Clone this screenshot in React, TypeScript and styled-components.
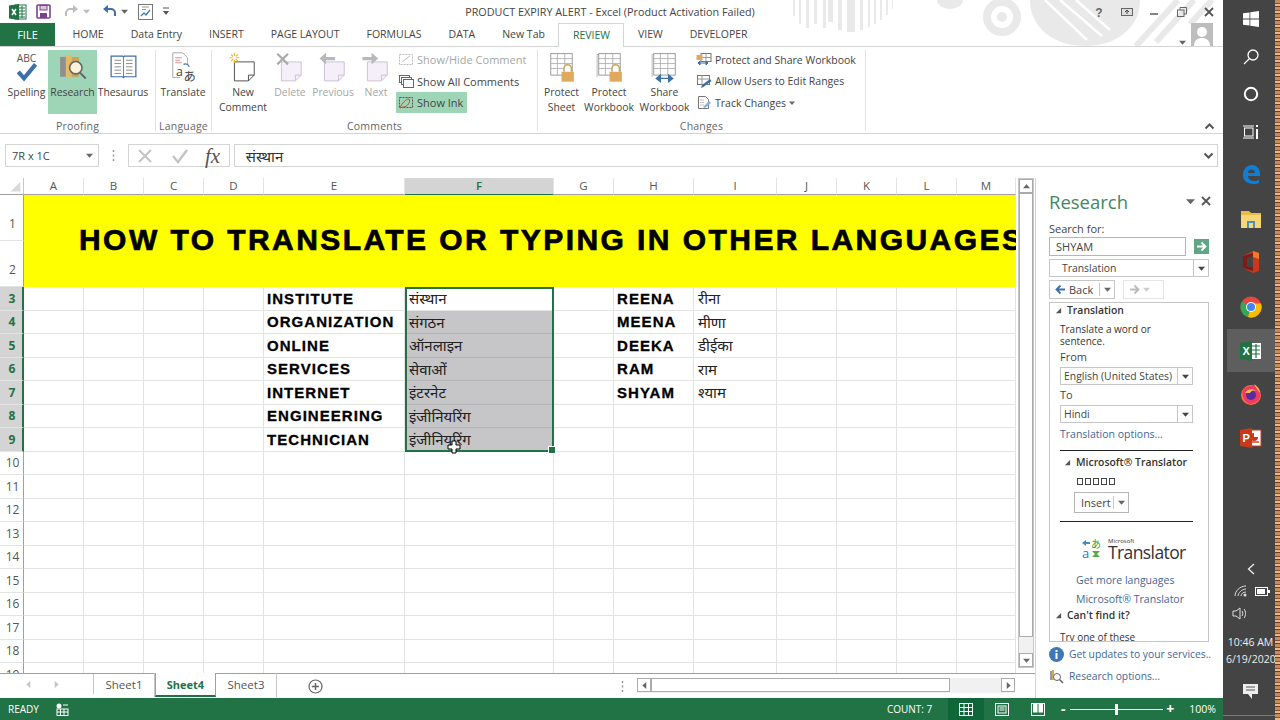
import React from 'react';
import styled, { createGlobalStyle } from 'styled-components';

const GlobalStyle = createGlobalStyle`
  html, body {
    margin: 0;
    padding: 0;
    width: 1280px;
    height: 720px;
    overflow: hidden;
    background: #fff;
    font-family: "Open Sans", "Noto Sans", "Noto Sans Devanagari", sans-serif;
    color: #444;
  }
  * { box-sizing: border-box; }
`;

const GREEN = '#217346';
const HILITE = '#9fd5b7';
const LINK = '#3f6797';

const Screen = styled.div`
  width: 1280px;
  height: 720px;
  display: flex;
  overflow: hidden;
`;

const ExcelWindow = styled.div`
  width: 1223px;
  height: 720px;
  display: flex;
  flex-direction: column;
  flex: none;
`;

/* ---------- header ---------- */

const Header = styled.header`
  position: relative;
  height: 47px;
  flex: none;
  border-bottom: 1px solid #d4d4d4;
`;

const TitleArt = styled.svg`
  position: absolute;
  left: 790px;
  top: 0;
  width: 433px;
  height: 46px;
`;

const TitleBar = styled.div`
  position: relative;
  height: 23px;
  display: flex;
  align-items: center;
  padding-left: 9px;
`;

const QuickAccess = styled.div`
  display: flex;
  align-items: center;
  gap: 9px;
  width: 180px;
  flex: none;
`;

const QatPair = styled.div<{ $left: number }>`
  display: flex;
  align-items: center;
  gap: 4px;
  margin-left: ${(p) => p.$left}px;
`;

const TitleText = styled.div`
  width: 842px;
  flex: none;
  text-align: center;
  font-size: 10.8px;
  color: #444;
  white-space: nowrap;
`;

const WindowControls = styled.div`
  display: flex;
  align-items: center;
  gap: 15.5px;
  margin-left: 62px;
`;

const TabRow = styled.div`
  position: relative;
  height: 23px;
  display: flex;
  align-items: flex-end;
`;

const FileTab = styled.div`
  width: 55px;
  height: 23px;
  margin-right: 4px;
  background: ${GREEN};
  color: #fff;
  font-size: 11px;
  line-height: 23px;
  text-align: center;
`;

const Tab = styled.div<{ $active?: boolean }>`
  height: ${(p) => (p.$active ? '24px' : '23px')};
  margin-bottom: ${(p) => (p.$active ? '-1px' : '0')};
  padding: 0 13.5px;
  font-size: 10.5px;
  line-height: 23px;
  white-space: nowrap;
  color: ${(p) => (p.$active ? GREEN : '#444')};
  background: ${(p) => (p.$active ? '#fff' : 'transparent')};
  border: ${(p) => (p.$active ? '1px solid #d4d4d4' : '0')};
  border-bottom: 0;
`;

const Account = styled.div`
  position: absolute;
  right: 10px;
  top: 0;
  display: flex;
  align-items: flex-end;
  gap: 5px;
  height: 23px;
`;

const Ribbon = styled.div`
  position: relative;
  height: 87px;
  flex: none;
  display: flex;
  padding-top: 3px;
  border-bottom: 1px solid #d4d4d4;
`;

const RibbonGroup = styled.div<{ $width: number }>`
  width: ${(p) => p.$width}px;
  flex: none;
  display: flex;
  flex-direction: column;
  border-right: 1px solid #e3e3e3;
  margin-bottom: 2px;
`;

const GroupBody = styled.div<{ $pad?: number }>`
  flex: 1;
  display: flex;
  padding-left: ${(p) => p.$pad ?? 0}px;
`;

const GroupLabel = styled.div`
  height: 14px;
  font-size: 10.5px;
  line-height: 18px;
  letter-spacing: 0.2px;
  text-align: center;
  color: #666;
`;

const BigButton = styled.div<{ $width: number; $on?: boolean; $off?: boolean }>`
  width: ${(p) => p.$width}px;
  height: 64px;
  flex: none;
  display: flex;
  flex-direction: column;
  align-items: center;
  padding-top: 2px;
  font-size: 10.4px;
  line-height: 15px;
  text-align: center;
  white-space: nowrap;
  background: ${(p) => (p.$on ? HILITE : 'transparent')};
  color: ${(p) => (p.$off ? '#a6a6a6' : '#444')};
  & > svg {
    width: 31px;
    height: 33px;
    flex: none;
  }
`;

const SmallStack = styled.div<{ $width: number; $size: number }>`
  width: ${(p) => p.$width}px;
  flex: none;
  display: flex;
  flex-direction: column;
  gap: 0.5px;
  margin-top: -1px;
  font-size: ${(p) => p.$size}px;
`;

const SmallButton = styled.div<{ $on?: boolean; $off?: boolean }>`
  height: 21px;
  display: flex;
  align-items: center;
  align-self: flex-start;
  gap: 3px;
  padding: 0 4px 0 2px;
  white-space: nowrap;
  background: ${(p) => (p.$on ? HILITE : 'transparent')};
  color: ${(p) => (p.$off ? '#a6a6a6' : '#444')};
`;

const Collapse = styled.svg`
  position: absolute;
  right: 8px;
  bottom: 3px;
`;

/* ---------- formula bar ---------- */

const FormulaBar = styled.div`
  height: 44px;
  flex: none;
  display: flex;
  align-items: flex-start;
  padding: 10px 5px 0 5px;
`;

const NameBox = styled.div`
  width: 94px;
  height: 23px;
  border: 1px solid #d4d4d4;
  display: flex;
  align-items: center;
  justify-content: space-between;
  padding: 0 5px 0 6px;
  font-size: 11px;
`;

const Dots = styled.div`
  width: 29px;
  height: 23px;
  display: flex;
  align-items: center;
  justify-content: center;
`;

const FuncBox = styled.div`
  width: 102px;
  height: 23px;
  border: 1px solid #d4d4d4;
  display: flex;
  align-items: center;
  gap: 19px;
  padding-left: 8px;
  color: #555;
`;

const FxLabel = styled.span`
  font-family: "Liberation Serif", serif;
  font-style: italic;
  font-size: 21px;
  line-height: 20px;
  margin-left: -2px;
`;

const FormulaInput = styled.div`
  width: 985px;
  height: 23px;
  margin-left: 4px;
  border: 1px solid #d4d4d4;
  display: flex;
  align-items: center;
  justify-content: space-between;
  padding: 0 3px 0 11px;
  font-size: 15px;
  color: #333;
`;

/* ---------- workspace ---------- */

const Workspace = styled.div`
  flex: 1;
  min-height: 0;
  display: flex;
`;

const SheetArea = styled.div`
  width: 1036px;
  flex: none;
  display: flex;
  flex-direction: column;
  border-right: 1px solid #d4d4d4;
`;

const SheetTop = styled.div`
  height: 495px;
  flex: none;
  display: flex;
  overflow: hidden;
`;

const GridClip = styled.div`
  position: relative;
  width: 1016px;
  height: 495px;
  flex: none;
  overflow: hidden;
`;

const SheetGrid = styled.div`
  display: grid;
  grid-template-columns: 24px 60px 60px 60px 60px 141px 149px 60px 80px 83px 60px 60px 60px 59px;
  grid-template-rows: 17px 46px 46px repeat(17, 23.5px);
`;

const Corner = styled.div`
  border-right: 1px solid #c6c6c6;
  border-bottom: 1px solid #9f9f9f;
  display: flex;
  align-items: flex-end;
  justify-content: flex-end;
  padding: 0 1px 1px 0;
`;

const ColHead = styled.div<{ $on?: boolean }>`
  font-size: 11.5px;
  line-height: 16px;
  text-align: center;
  color: ${(p) => (p.$on ? GREEN : '#555')};
  font-weight: ${(p) => (p.$on ? 600 : 400)};
  background: ${(p) => (p.$on ? '#d4d4d4' : '#fff')};
  border-right: 1px solid #e3e3e3;
  border-bottom: 1px solid ${(p) => (p.$on ? GREEN : '#9f9f9f')};
`;

const RowHead = styled.div<{ $on?: boolean; $tall?: boolean }>`
  font-size: 12px;
  display: flex;
  align-items: center;
  justify-content: center;
  padding-left: 2px;
  padding-top: ${(p) => (p.$tall ? '12px' : '0')};
  color: ${(p) => (p.$on ? GREEN : '#555')};
  font-weight: ${(p) => (p.$on ? 700 : 400)};
  background: ${(p) => (p.$on ? '#d4d4d4' : '#fff')};
  border-right: ${(p) => (p.$on ? `2px solid ${GREEN}` : '1px solid #9f9f9f')};
  border-bottom: 1px solid #e3e3e3;
`;

const Banner = styled.div`
  grid-column: 2 / -1;
  grid-row: 2 / 4;
  background: #ffff00;
  display: flex;
  align-items: center;
  padding: 0 0 2px 55px;
  overflow: hidden;
  font-family: "Liberation Sans", Arial, sans-serif;
  font-weight: 700;
  font-size: 30px;
  letter-spacing: 2.44px;
  color: #000;
  white-space: nowrap;
  -webkit-text-stroke: 0.7px #000;
`;

const Cell = styled.div<{ $selected?: boolean }>`
  display: flex;
  align-items: center;
  padding-left: 3px;
  overflow: visible;
  white-space: nowrap;
  background: ${(p) => (p.$selected ? '#c6c5c8' : '#fff')};
  border-right: 1px solid ${(p) => (p.$selected ? '#c6c5c8' : '#e3e3e3')};
  border-bottom: 1px solid ${(p) => (p.$selected ? '#b3b2b5' : '#e3e3e3')};
`;

const LabelText = styled.span`
  font-family: "Liberation Sans", Arial, sans-serif;
  font-weight: 700;
  font-size: 15px;
  letter-spacing: 1.05px;
  color: #000;
  -webkit-text-stroke: 0.3px #000;
`;

const HindiText = styled.span`
  font-size: 15px;
  margin-left: 1px;
  color: #222;
`;

const SelectionBox = styled.div`
  position: absolute;
  left: 405px;
  top: 109px;
  width: 149px;
  height: 165px;
  border: 2px solid ${GREEN};
  pointer-events: none;
  &::after {
    content: '';
    position: absolute;
    right: -4px;
    bottom: -4px;
    width: 6px;
    height: 6px;
    background: ${GREEN};
    border: 1px solid #fff;
  }
`;

const CellCursor = styled.svg`
  position: absolute;
  left: 447px;
  top: 262px;
`;

const VScroll = styled.div`
  width: 16px;
  height: 490px;
  margin-left: 2px;
  flex: none;
  display: flex;
  flex-direction: column;
  border: 1px solid #c6c6c6;
  background: #f1f1f1;
`;

const ScrollArrow = styled.div`
  height: 14px;
  width: 14px;
  flex: none;
  background: #fff;
  border: 1px solid #ababab;
  display: flex;
  align-items: center;
  justify-content: center;
`;

const VThumb = styled.div`
  height: 444px;
  flex: none;
  background: #fff;
  border: 1px solid #ababab;
`;

const SheetBar = styled.div`
  height: 25px;
  flex: none;
  display: flex;
  align-items: stretch;
  border-top: 1px solid #9f9f9f;
`;

const TabNav = styled.div`
  width: 94px;
  display: flex;
  align-items: center;
  padding-left: 25px;
  gap: 21px;
  flex: none;
  border-right: 1px solid #c6c6c6;
  margin-bottom: 4px;
`;

const SheetTab = styled.div<{ $active?: boolean }>`
  width: 61px;
  height: 24px;
  flex: none;
  margin-top: -1px;
  padding-top: 2px;
  text-align: center;
  font-size: ${(p) => (p.$active ? '11px' : '11.5px')};
  line-height: 20px;
  font-weight: ${(p) => (p.$active ? 700 : 400)};
  color: ${(p) => (p.$active ? GREEN : '#555')};
  background: ${(p) => (p.$active ? '#fff' : 'transparent')};
  border-left: ${(p) => (p.$active ? '1px solid #9f9f9f' : '0')};
  border-right: 1px solid ${(p) => (p.$active ? '#9f9f9f' : '#c6c6c6')};
  border-bottom: ${(p) => (p.$active ? `2px solid ${GREEN}` : '0')};
  white-space: nowrap;
`;

const AddSheet = styled.div`
  margin-left: 31px;
  display: flex;
  align-items: center;
  width: 313px;
  flex: none;
`;

const SplitDots = styled.div`
  width: 16px;
  display: flex;
  align-items: center;
  flex: none;
`;

const HScroll = styled.div`
  width: 378px;
  height: 15px;
  margin-top: 4px;
  flex: none;
  display: flex;
  background: #f1f1f1;
`;

const HThumb = styled.div`
  width: 299px;
  height: 14px;
  flex: none;
  background: #fff;
  border: 1px solid #ababab;
`;

const ScrollGap = styled.div`
  flex: 1;
`;

/* ---------- research pane ---------- */

const ResearchPane = styled.aside`
  width: 187px;
  flex: none;
  position: relative;
  padding: 0 14px 0 13px;
  display: flex;
  flex-direction: column;
`;

const PaneHead = styled.div`
  height: 30px;
  margin-top: 8px;
  display: flex;
  align-items: center;
  justify-content: space-between;
`;

const PaneTitle = styled.div`
  font-size: 18.5px;
  font-weight: 400;
  color: ${GREEN};
  opacity: 0.85;
`;

const PaneActions = styled.div`
  display: flex;
  align-items: center;
  gap: 5px;
  margin-right: -3px;
`;

const SearchLabel = styled.div`
  font-size: 11px;
  line-height: 13px;
  margin-top: 6px;
  height: 15px;
`;

const SearchRow = styled.div`
  height: 19px;
  display: flex;
  justify-content: space-between;
`;

const TextField = styled.div`
  width: 137px;
  height: 19px;
  border: 1px solid #b5b5b5;
  font-size: 11px;
  line-height: 17px;
  padding-left: 6px;
`;

const GoButton = styled.div`
  width: 15px;
  height: 15px;
  margin-top: 2px;
  background: #5fa586;
  display: flex;
  align-items: center;
  justify-content: center;
`;

const Select = styled.div<{ $width?: number }>`
  width: ${(p) => (p.$width ? `${p.$width}px` : '100%')};
  height: 18px;
  flex: none;
  border: 1px solid #c6c6c6;
  display: flex;
  align-items: center;
  justify-content: space-between;
  font-size: 10.4px;
  padding-left: 3px;
  white-space: nowrap;
`;

const SelectArrow = styled.div`
  width: 15px;
  height: 100%;
  border-left: 1px solid #c6c6c6;
  display: flex;
  align-items: center;
  justify-content: center;
  flex: none;
`;

const SourceSelect = styled(Select)`
  margin-top: 3px;
  padding-left: 12px;
`;

const NavRow = styled.div`
  height: 19px;
  margin-top: 3px;
  display: flex;
  gap: 8px;
`;

const NavButton = styled.div<{ $width: number; $off?: boolean }>`
  width: ${(p) => p.$width}px;
  height: 19px;
  border: 1px solid ${(p) => (p.$off ? '#e5e5e5' : '#c6c6c6')};
  display: flex;
  align-items: center;
  font-size: 11px;
  padding-left: 5px;
  gap: 3px;
`;

const NavDrop = styled.div`
  margin-left: auto;
  width: 15px;
  height: 13px;
  border-left: 1px solid #c6c6c6;
  display: flex;
  align-items: center;
  justify-content: center;
`;

const ResultsPanel = styled.div`
  height: 340px;
  margin-top: 3px;
  flex: none;
  border: 1px solid #c6c6c6;
  overflow: hidden;
  padding: 0 0 0 3px;
  font-size: 11px;
`;

const SectionHead = styled.div<{ $indent?: number; $top?: number }>`
  display: flex;
  align-items: center;
  gap: 5px;
  height: 14px;
  margin-top: ${(p) => p.$top ?? 0}px;
  padding-left: ${(p) => p.$indent ?? 2}px;
  font-size: 10.4px;
  font-weight: 600;
  color: #333;
  white-space: nowrap;
`;

const PanelBody = styled.div`
  padding-left: 7px;
  width: 155px;
`;

const PanelText = styled.div<{ $top: number }>`
  font-size: 10px;
  line-height: 12px;
  color: #333;
  margin-top: ${(p) => p.$top}px;
`;

const PanelLabel = styled.div`
  font-size: 11px;
  line-height: 14px;
  margin: 3px 0 3px;
`;

const PanelLink = styled.div<{ $indent?: number; $top: number }>`
  font-size: 10.5px;
  line-height: 14px;
  color: ${LINK};
  margin-top: ${(p) => p.$top}px;
  padding-left: ${(p) => p.$indent ?? 0}px;
  white-space: nowrap;
`;

const Rule = styled.div<{ $top: number }>`
  width: 133px;
  height: 1px;
  background: #222;
  margin-top: ${(p) => p.$top}px;
`;

const Tofu = styled.div`
  display: flex;
  gap: 2px;
  margin: 9px 0 0 17px;
`;

const TofuBox = styled.span`
  width: 6px;
  height: 7px;
  border: 1px solid #444;
`;

const InsertButton = styled.div`
  width: 55px;
  height: 21px;
  margin: 7px 0 0 14px;
  border: 1px solid #b5b5b5;
  display: flex;
  align-items: center;
  padding-left: 6px;
  font-size: 11px;
`;

const TranslatorLogo = styled.div`
  display: flex;
  align-items: center;
  gap: 6px;
  height: 22px;
  margin: 16px 0 13px 22px;
`;

const LogoWords = styled.div`
  display: flex;
  flex-direction: column;
  font-family: "Open Sans", sans-serif;
  color: #333;
`;

const LogoSmall = styled.span`
  font-size: 6px;
  line-height: 6px;
`;

const LogoBig = styled.span`
  font-size: 17.500px;
  line-height: 16px;
  letter-spacing: -0.6px;
`;

const PaneFooter = styled.div`
  display: flex;
  flex-direction: column;
  gap: 6px;
  margin-top: 4px;
`;

const FooterLink = styled.div`
  display: flex;
  align-items: center;
  gap: 5px;
  height: 16px;
  font-size: 10.3px;
  color: ${LINK};
  white-space: nowrap;
  & > svg {
    flex: none;
  }
`;

/* ---------- status bar ---------- */

const StatusBar = styled.footer`
  height: 22px;
  flex: none;
  background: ${GREEN};
  color: #fff;
  display: flex;
  align-items: center;
  padding-left: 8px;
  font-size: 10px;
`;

const ReadyLabel = styled.span`
  width: 48px;
`;

const StatusRight = styled.div`
  margin-left: auto;
  height: 100%;
  display: flex;
  align-items: center;
`;

const CountLabel = styled.span`
  margin-right: 16px;
`;

const ViewButton = styled.div<{ $on?: boolean }>`
  width: 36px;
  height: 100%;
  display: flex;
  align-items: center;
  justify-content: center;
  background: ${(p) => (p.$on ? '#0f6638' : 'transparent')};
`;

const ZoomSlider = styled.div`
  display: flex;
  align-items: center;
  width: 123px;
  padding-left: 3px;
`;

const ZoomTrack = styled.div`
  position: relative;
  width: 93px;
  height: 1px;
  margin: 0 3px;
  background: #fff;
  &::after {
    content: '';
    position: absolute;
    left: 45px;
    top: -5px;
    width: 3px;
    height: 11px;
    background: #fff;
  }
`;

const ZoomSign = styled.span`
  width: 8px;
  text-align: center;
  font-size: 14px;
  font-weight: 700;
  line-height: 12px;
`;

const ZoomValue = styled.span`
  font-size: 10.5px;
  margin-left: 10px;
  margin-right: 7px;
`;

/* ---------- windows taskbar ---------- */

const Taskbar = styled.nav`
  width: 52px;
  flex: none;
  background: #444444;
  display: flex;
  flex-direction: column;
  justify-content: space-between;
  padding-bottom: 4px;
  color: #fff;
`;

const TaskGroup = styled.div`
  display: flex;
  flex-direction: column;
`;

const TaskSlot = styled.div<{ $h: number; $on?: boolean }>`
  height: ${(p) => p.$h}px;
  margin-left: 4px;
  display: flex;
  align-items: center;
  justify-content: center;
  background: ${(p) => (p.$on ? '#5e5e5e' : 'transparent')};
`;

const NoticeSlot = styled(TaskSlot)`
  margin-left: 0;
  padding-left: 4px;
  border-bottom: 1px solid #7a7a7a;
`;

const TrayRow = styled.div<{ $pad: number }>`
  display: flex;
  align-items: center;
  gap: 8px;
  height: 22px;
  padding-left: ${(p) => p.$pad}px;
`;

const ClockText = styled.div`
  font-size: 10.5px;
  line-height: 17px;
  text-align: center;
  white-space: nowrap;
  margin: 10px 0 0 3px;
  overflow: hidden;
  color: #eee;
`;

const Wallpaper = styled.div`
  width: 5px;
  flex: none;
  background: repeating-linear-gradient(
    180deg,
    #c98a5a 0 3px,
    #8a4f33 3px 4px,
    #e6b98c 4px 6px,
    #6d3a27 6px 7px
  );
`;

/* ---------- icons ---------- */

const Tri = ({ dir = 'down', c = '#666', s = 7 }: { dir?: 'down' | 'up' | 'left' | 'right' | 'corner'; c?: string; s?: number }) => {
  const pts = {
    down: '0,2 8,2 4,6.5',
    up: '0,6 8,6 4,1.5',
    left: '6,0 6,8 1.5,4',
    right: '2,0 2,8 6.5,4',
    corner: '7,1 7,7 1,7',
  }[dir];
  return (
    <svg width={s} height={s} viewBox="0 0 8 8">
      <polygon points={pts} fill={c} />
    </svg>
  );
};

const ExcelLogo = ({ size = 18 }: { size?: number }) => (
  <svg width={size} height={size} viewBox="0 0 18 18">
    <rect x="6" y="2" width="11" height="14" fill="#fff" stroke={GREEN} />
    <path d="M10 5h6M10 8h6M10 11h6M10 14h6M13 3v12" stroke={GREEN} strokeWidth="1" />
    <path d="M0 2.5 10 1v16L0 15.5z" fill={GREEN} />
    <path d="M3 6l4 6M7 6l-4 6" stroke="#fff" strokeWidth="1.5" />
  </svg>
);

const SaveIcon = () => (
  <svg width="15" height="15" viewBox="0 0 15 15">
    <rect x="1" y="1" width="13" height="13" rx="1" fill="#fff" stroke="#7c3f8f" strokeWidth="1.6" />
    <rect x="4" y="1.5" width="7" height="4.5" fill="#d9c7e0" stroke="#7c3f8f" />
    <rect x="4" y="9" width="7" height="5" fill="#7c3f8f" />
  </svg>
);

const CurveArrow = ({ c, flip }: { c: string; flip?: boolean }) => (
  <svg width="15" height="13" viewBox="0 0 15 13" style={flip ? { transform: 'scaleX(-1)' } : undefined}>
    <path d="M2 11V8a4 4 0 0 1 4-4h6" fill="none" stroke={c} strokeWidth="2" />
    <path d="M9 0l5 4-5 4z" fill={c} />
  </svg>
);

const FormIcon = () => (
  <svg width="15" height="16" viewBox="0 0 15 16">
    <rect x="0.5" y="0.5" width="14" height="15" fill="#fff" stroke="#777" />
    <path d="M3 12l3-3 2 2 4-5" fill="none" stroke="#3f7fbf" strokeWidth="1.4" />
    <path d="M4 3h7M4 5.5h4" stroke="#999" />
  </svg>
);

const CustomizeIcon = () => (
  <svg width="8" height="9" viewBox="0 0 8 9">
    <path d="M1 1h6" stroke="#555" />
    <polygon points="1,4 7,4 4,8" fill="#555" />
  </svg>
);

const SpellingIcon = () => (
  <svg viewBox="0 0 36 40">
    <text x="18" y="12" textAnchor="middle" fontSize="12.5" fontFamily="Open Sans, sans-serif" fill="#555">ABC</text>
    <path d="M8 22l7 8L29 13" transform="translate(0 2)" fill="none" stroke="#3d6fa8" strokeWidth="5" />
  </svg>
);

const ResearchIcon = () => (
  <svg viewBox="0 0 36 40">
    <rect x="3" y="6" width="7" height="24" fill="#8f8f8f" />
    <rect x="10" y="4" width="7" height="26" fill="#e4b96a" />
    <rect x="17" y="6" width="9" height="24" fill="#c9a25b" />
    <circle cx="22" cy="19" r="7.500" fill="#fdf3d8" stroke="#666" strokeWidth="2" />
    <path d="M27 25l7 7" stroke="#666" strokeWidth="2.500" />
  </svg>
);

const ThesaurusIcon = () => (
  <svg viewBox="0 0 36 40">
    <path d="M3 5h14l1 1 1-1h14v25H19l-1 1-1-1H3z" fill="#fff" stroke="#3d6fa8" strokeWidth="1.500" />
    <path d="M7 10h8M7 14h8M7 18h8M7 22h8M7 26h8M21 10h8M21 14h8M21 18h8M21 22h8M21 26h8" stroke="#777" />
    <path d="M18 6v25" stroke="#3d6fa8" />
  </svg>
);

const TranslateIcon = () => (
  <svg viewBox="0 0 36 40">
    <path d="M5 1h12l6 6v8M5 1v30h9" fill="#fff" stroke="#999" />
    <path d="M8 7h8M8 10h6M8 13h8" stroke="#c77" />
    <text x="9" y="29" fontSize="15" fontFamily="Open Sans, sans-serif" fill="#444">a</text>
    <text x="18" y="35" fontSize="15" fontFamily="Noto Sans CJK JP, sans-serif" fill="#444">あ</text>
    <path d="M18 15a5 5 0 0 1 7 3" fill="none" stroke="#3d6fa8" strokeWidth="1.400" />
  </svg>
);

const CommentSheet = ({ c = '#444', fill = '#fff' }: { c?: string; fill?: string }) => (
  <path d="M7 12h24v16l-7 7H7z M24 35v-7h7" fill={fill} stroke={c} strokeWidth="1.100" />
);

const NewCommentIcon = () => (
  <svg viewBox="0 0 36 40">
    <CommentSheet />
    <g stroke="#f0b429" strokeWidth="1.400">
      <path d="M7 1v12M1 7h12M3 3l8 8M11 3l-8 8" />
    </g>
    <circle cx="7" cy="7" r="2.500" fill="#fff" />
  </svg>
);

const GhostComment = ({ kind }: { kind: 'x' | 'left' | 'right' }) => (
  <svg viewBox="0 0 36 40">
    <CommentSheet c="#c9bdd0" fill="#f5effa" />
    {kind === 'x' && <path d="M2 2l13 13M15 2L2 15" stroke="#aaa" strokeWidth="2.600" />}
    {kind === 'left' && <path d="M1 8l8-7v5h11v4H9v5z" fill="#b8b8b8" />}
    {kind === 'right' && <path d="M20 8l-8-7v5H1v4h11v5z" fill="#b8b8b8" />}
  </svg>
);

const SheetLock = ({ kind }: { kind: 'sheet' | 'book' | 'share' }) => (
  <svg viewBox="0 0 36 40">
    {kind !== 'sheet' && <path d="M3 30V3h25" fill="none" stroke="#aaa" />}
    <rect x="5" y="2" width="26" height="26" fill="#fff" stroke="#888" />
    <path d="M5 8h26M5 14h26M5 20h26M13 2v26M22 2v26" stroke="#aaa" />
    {kind === 'share' ? (
      <path d="M8 32h20M8 32l5-4v8zM28 32l-5-4v8z" fill="#3d6fa8" stroke="#3d6fa8" strokeWidth="1.600" />
    ) : (
      <g>
        <path d="M21 24v-4a4.500 4.500 0 0 1 9 0v4" fill="#fff" stroke="#c9a25b" strokeWidth="1.800" />
        <rect x="18" y="24" width="15" height="12" fill="#e0aa5c" />
      </g>
    )}
  </svg>
);

const SmallIcon = ({ kind }: { kind: 'hide' | 'all' | 'ink' | 'protect' | 'allow' | 'track' }) => (
  <svg width="16" height="15" viewBox="0 0 16 15">
    {kind === 'hide' && (
      <g fill="none" stroke="#bbb">
        <rect x="1.5" y="2.5" width="13" height="10" strokeDasharray="2 1" />
        <path d="M4 10l8-6" />
      </g>
    )}
    {kind === 'all' && (
      <g fill="#fff" stroke="#666">
        <rect x="1.5" y="1.5" width="10" height="7" />
        <rect x="3.5" y="3.5" width="10" height="7" />
        <rect x="5.5" y="5.5" width="10" height="8" />
      </g>
    )}
    {kind === 'ink' && (
      <g fill="none">
        <rect x="1.5" y="2.5" width="13" height="10" stroke="#555" strokeDasharray="2 1" />
        <path d="M2 13c2-5 6-9 9-9 2 2-1 8-6 8z" stroke="#b5533c" />
      </g>
    )}
    {kind === 'protect' && (
      <g>
        <rect x="5" y="1.5" width="10" height="8" fill="#fff" stroke="#777" />
        <path d="M5 5.500h10M10 1.500v8" stroke="#999" />
        <rect x="0.500" y="3" width="6" height="5" fill="#e0aa5c" />
        <path d="M2 11h10M2 11l2-2v4zM12 11l-2-2v4z" stroke="#3d6fa8" fill="#3d6fa8" />
      </g>
    )}
    {kind === 'allow' && (
      <g>
        <rect x="1.5" y="1.5" width="12" height="9" fill="#fff" stroke="#777" />
        <path d="M1.500 5h12M6 1.500v9" stroke="#999" />
        <path d="M5 14l1-3 8-6 1.500 2-8 6z" fill="#3d6fa8" />
      </g>
    )}
    {kind === 'track' && (
      <g>
        <path d="M2.500 1.500h7l3 3v9h-10z" fill="#fff" stroke="#777" />
        <path d="M4.500 5h4M4.500 7.500h3M4.500 10h3" stroke="#888" strokeDasharray="1 1" />
        <path d="M7 12l6-6 2 2-6 5z" fill="#8bb2d8" />
      </g>
    )}
  </svg>
);

const Chevron = () => (
  <svg width="11" height="7" viewBox="0 0 11 7">
    <path d="M1.500 1.500l4 4 4-4" fill="none" stroke="#555" strokeWidth="2" />
  </svg>
);

const WinControl = ({ kind }: { kind: 'help' | 'ribbon' | 'min' | 'max' | 'close' }) => (
  <svg width="12" height="12" viewBox="0 0 12 12">
    {kind === 'help' && (
      <text x="6" y="11" textAnchor="middle" fontSize="12" fontWeight="700" fontFamily="Liberation Sans, sans-serif" fill="#666">?</text>
    )}
    {kind === 'ribbon' && (
      <g>
        <rect x="0.500" y="2.500" width="11" height="7" fill="#ddd" stroke="#666" />
        <path d="M6 8V4M4 6l2-2 2 2" stroke="#444" fill="none" />
      </g>
    )}
    {kind === 'min' && <path d="M2 8h8" stroke="#666" strokeWidth="1.600" />}
    {kind === 'max' && (
      <g fill="none" stroke="#666">
        <rect x="1.500" y="4" width="6.500" height="6.500" />
        <path d="M4 4V1.500h6.500V8H8" />
      </g>
    )}
    {kind === 'close' && <path d="M2 2l8 8M10 2l-8 8" stroke="#555" strokeWidth="1.800" />}
  </svg>
);

const AccountIcon = () => (
  <svg width="22" height="23" viewBox="0 0 22 23">
    <rect width="22" height="23" fill="#bdbdbd" />
    <circle cx="11" cy="9" r="5" fill="#fff" />
    <path d="M3 23c0-6 4-8 8-8s8 2 8 8z" fill="#fff" />
  </svg>
);

const HeaderArt = () => (
  <TitleArt viewBox="0 0 433 46">
    <g fill="#e9e9e9">
      <path d="M3 0h2v16H3zM9 0h2v24H9zM16 0h3v28H16zM24 0h3v24H24zM33 0h3v28H33zM38 0h5v22H38zM48 0h4v30H48zM57 0h8v32H57zM70 0h3v30H70zM78 0h2v27H78zM84 0h2v24H84zM90 0h2v20H90zM96 0h2v15H96zM102 0h1v9H102z" />
      <ellipse cx="160" cy="0" rx="13" ry="9" />
      <circle cx="212" cy="17" r="15" fill="none" stroke="#e9e9e9" strokeWidth="8" />
      <circle cx="212" cy="17" r="5" />
      <path d="M240 0h110c0 28-24 46-55 46s-55-18-55-46z" />
    </g>
    <path d="M255 0l42 40M270 0l42 36M286 0l34 30" stroke="#fff" strokeWidth="2.500" />
    <g stroke="#e9e9e9" strokeWidth="6">
      <path d="M388 0l-42 46M404 0l-38 42M422 0l-22 24" />
    </g>
  </TitleArt>
);

const CrossCursor = () => (
  <CellCursor width="14" height="14" viewBox="0 0 14 14">
    <path d="M5 1h4v4h4v4H9v4H5V9H1V5h4z" fill="#fff" stroke="#000" />
  </CellCursor>
);

const WinLogo = () => (
  <svg width="16" height="16" viewBox="0 0 16 16">
    <path d="M0 2.300l6.500-.9v6.200H0zM7.300 1.300L16 0v7.600H7.300zM0 8.400h6.500v6.200L0 13.700zM7.300 8.400H16V16l-8.700-1.200z" fill="#fff" />
  </svg>
);

const SearchGlass = () => (
  <svg width="16" height="16" viewBox="0 0 16 16">
    <circle cx="10" cy="6" r="5" fill="none" stroke="#fff" strokeWidth="1.300" />
    <path d="M6.500 9.500L1 15" stroke="#fff" strokeWidth="1.300" />
  </svg>
);

const CortanaRing = () => (
  <svg width="16" height="16" viewBox="0 0 16 16">
    <circle cx="8" cy="8" r="6.200" fill="none" stroke="#fff" strokeWidth="2" />
  </svg>
);

const TaskView = () => (
  <svg width="16" height="16" viewBox="0 0 16 16">
    <path d="M0 2h11M0 14h11" stroke="#fff" />
    <rect x="1.500" y="4" width="8.500" height="8" fill="none" stroke="#fff" />
    <path d="M14 1v2M14 5v10" stroke="#fff" strokeWidth="2" />
  </svg>
);

const EdgeIcon = () => (
  <svg width="20" height="20" viewBox="0 0 20 20">
    <path d="M2 11C2 5 6 1 11 1c5 0 8 4 8 9v2H7c0 3 3 5 6 5 2 0 4-.5 5-1v3c-1.500 .7-3.500 1-5.500 1C6 20 2 16 2 11zm5-2h7c0-2-1.500-3.500-3.500-3.500S7 7 7 9z" fill="#0f7fd6" />
  </svg>
);

const FolderIcon = () => (
  <svg width="20" height="18" viewBox="0 0 20 18">
    <path d="M0 1h8l2 2h10v15H0z" fill="#e9b949" />
    <rect x="0" y="5" width="20" height="13" fill="#f7d774" />
    <rect x="6" y="11" width="8" height="7" fill="#4a90c2" />
    <rect x="8" y="13" width="4" height="5" fill="#f7d774" />
  </svg>
);

const OfficeIcon = () => (
  <svg width="18" height="22" viewBox="0 0 18 22">
    <path d="M1 5L11 0l6 2v18l-6 2L1 17z" fill="#c8391b" />
    <path d="M1 5l10-3v18L1 17z" fill="#7d1a1a" />
    <path d="M5 7l6-2v12l-6-2z" fill="#444" />
    <path d="M11 0l6 2v6l-6-2z" fill="#ef7b2a" />
  </svg>
);

const ChromeIcon = () => (
  <svg width="22" height="22" viewBox="0 0 22 22">
    <circle cx="11" cy="11" r="10.500" fill="#e8453c" />
    <path d="M11 11L1.900 5.700A10.500 10.500 0 0 0 8 21.100z" fill="#34a853" />
    <path d="M11 11l-3 10.100A10.500 10.500 0 0 0 21 7.500H11z" fill="#fbbc05" />
    <circle cx="11" cy="11" r="5" fill="#fff" />
    <circle cx="11" cy="11" r="4" fill="#4285f4" />
  </svg>
);

const FirefoxIcon = () => (
  <svg width="22" height="22" viewBox="0 0 22 22">
    <circle cx="11" cy="12" r="10" fill="#ff7139" />
    <path d="M3 7c3-4 12-6 16-1 3 5 1 14-8 15C5 21 1 13 3 7z" fill="#e31587" opacity="0.6" />
    <circle cx="11" cy="12" r="5" fill="#5b2a9d" />
    <path d="M5 10c2-4 8-5 11-2-3-1-5 0-6 2-2 0-3 0-5 0z" fill="#ffbd4f" />
    <path d="M14 1c3 2 6 5 6 9-2-3-4-5-6-9z" fill="#ffbd4f" />
  </svg>
);

const PowerPointIcon = () => (
  <svg width="22" height="20" viewBox="0 0 22 20">
    <rect x="8" y="2" width="13" height="16" fill="#fff" stroke="#c8391b" />
    <path d="M14 5a4 4 0 1 0 4 4h-4z" fill="#c8391b" />
    <path d="M12 14h7" stroke="#c8391b" strokeWidth="1.400" />
    <path d="M0 2l12-2v20L0 18z" fill="#c8391b" />
    <text x="2.500" y="14" fontSize="11" fontWeight="700" fontFamily="Liberation Sans, sans-serif" fill="#fff">P</text>
  </svg>
);

const TaskExcel = () => (
  <svg width="22" height="20" viewBox="0 0 22 20">
    <rect x="8" y="2" width="13" height="16" fill="#fff" />
    <path d="M12 5h8M12 9h8M12 13h8M16 3v14" stroke={GREEN} strokeWidth="1.200" />
    <path d="M0 2l12-2v20L0 18z" fill={GREEN} />
    <text x="2.500" y="14" fontSize="11" fontWeight="700" fontFamily="Liberation Sans, sans-serif" fill="#fff">X</text>
  </svg>
);

const Wifi = () => (
  <svg width="13" height="12" viewBox="0 0 13 12">
    <path d="M1 11C1 6 6 1 12 1M4 11c0-3 4-7 8-7M7 11c0-2 2-4 5-4" fill="none" stroke="#ddd" />
    <circle cx="11" cy="10" r="1.500" fill="#ddd" />
  </svg>
);

const Battery = () => (
  <svg width="15" height="9" viewBox="0 0 15 9">
    <rect x="0.500" y="0.500" width="12" height="8" fill="none" stroke="#fff" />
    <rect x="2" y="2" width="8" height="5" fill="#fff" />
    <rect x="13" y="3" width="2" height="3" fill="#fff" />
  </svg>
);

const Volume = () => (
  <svg width="16" height="13" viewBox="0 0 16 13">
    <path d="M1 4h3l4-3v11L4 9H1z" fill="none" stroke="#ddd" />
    <path d="M10 4c1 1 1 4 0 5M12 2c2 2 2 7 0 9" fill="none" stroke="#ddd" />
  </svg>
);

const Notice = () => (
  <svg width="16" height="15" viewBox="0 0 16 15">
    <path d="M0 0h15v10H9v5l-4-5H0z" fill="#eee" />
    <path d="M3 3h9M3 6h9" stroke="#555" />
  </svg>
);

const GoArrow = ({ c = '#fff', s = 11 }: { c?: string; s?: number }) => (
  <svg width={s} height={s} viewBox="0 0 11 11">
    <path d="M1 5.500h8M5.500 1.500l4 4-4 4" fill="none" stroke={c} strokeWidth="1.800" />
  </svg>
);

const BackArrow = () => (
  <svg width="11" height="11" viewBox="0 0 11 11">
    <path d="M10 5.500H2M5.500 1.500l-4 4 4 4" fill="none" stroke="#3d6fa8" strokeWidth="1.800" />
  </svg>
);

const InfoDot = () => (
  <svg width="15" height="15" viewBox="0 0 15 15">
    <circle cx="7.500" cy="7.500" r="7.500" fill="#3d78b8" />
    <rect x="6.500" y="6" width="2" height="6" fill="#fff" />
    <rect x="6.500" y="3" width="2" height="2" fill="#fff" />
  </svg>
);

const OptionsGlass = () => (
  <svg width="15" height="15" viewBox="0 0 15 15">
    <rect x="1" y="2" width="2" height="9" fill="#999" />
    <rect x="3" y="1" width="2" height="10" fill="#d3a95e" />
    <circle cx="8" cy="8" r="3.500" fill="#fff" stroke="#666" />
    <path d="M10.500 10.500l3.500 3.500" stroke="#666" strokeWidth="1.500" />
  </svg>
);

const TranslatorMark = () => (
  <svg width="20" height="22" viewBox="0 0 20 22">
    <path d="M0 5l4-3v2h4v2H4v2z" fill="#3d8fc7" />
    <text x="9" y="10" fontSize="10" fontFamily="Noto Sans CJK JP, sans-serif" fill="#2f9e44">あ</text>
    <text x="0" y="20" fontSize="13" fontFamily="Open Sans, sans-serif" fill="#1f78c1">a</text>
    <path d="M10 13h8l-3 3 3 3h-8l3-3z" fill="#58a942" />
  </svg>
);

const MacroIcon = () => (
  <svg width="13" height="13" viewBox="0 0 13 13">
    <circle cx="3" cy="3" r="2.500" fill="#fff" />
    <rect x="1" y="6" width="11" height="6.500" fill="none" stroke="#fff" />
    <path d="M1 9h11M4.500 6v6.500M8 6v6.500M7 2h5" stroke="#fff" />
  </svg>
);

const NormalView = () => (
  <svg width="14" height="13" viewBox="0 0 14 13">
    <rect x="0.500" y="0.500" width="13" height="12" fill="none" stroke="#fff" />
    <path d="M0.500 4.500h13M0.500 8.500h13M5 .5v12M9.500 .5v12" stroke="#fff" />
  </svg>
);

const PageView = () => (
  <svg width="14" height="13" viewBox="0 0 14 13">
    <rect x="0.500" y="0.500" width="13" height="12" fill="none" stroke="#fff" />
    <rect x="3" y="3" width="8" height="7" fill="none" stroke="#fff" />
    <path d="M4.500 5h5M4.500 7h5" stroke="#fff" />
  </svg>
);

const BreakView = () => (
  <svg width="14" height="13" viewBox="0 0 14 13">
    <rect x="0.500" y="0.500" width="13" height="12" fill="none" stroke="#fff" />
    <rect x="2" y="0.500" width="4.500" height="9" fill="#fff" />
    <rect x="7.500" y="0.500" width="4.500" height="9" fill="#fff" />
  </svg>
);

const PlusCircle = () => (
  <svg width="15" height="15" viewBox="0 0 15 15">
    <circle cx="7.500" cy="7.500" r="6.500" fill="none" stroke="#666" strokeWidth="1.200" />
    <path d="M7.500 4v7M4 7.500h7" stroke="#666" strokeWidth="1.500" />
  </svg>
);

const VerticalDots = () => (
  <svg width="3" height="11" viewBox="0 0 3 11">
    <path d="M1.500 0v2M1.500 4.500v2M1.500 9v2" stroke="#999" strokeWidth="1.500" />
  </svg>
);

/* ---------- data ---------- */

const tabs = ['HOME', 'Data Entry', 'INSERT', 'PAGE LAYOUT', 'FORMULAS', 'DATA', 'New Tab', 'REVIEW', 'VIEW', 'DEVELOPER'];
const columns = ['A', 'B', 'C', 'D', 'E', 'F', 'G', 'H', 'I', 'J', 'K', 'L', 'M'];
const leftWords = ['INSTITUTE', 'ORGANIZATION', 'ONLINE', 'SERVICES', 'INTERNET', 'ENGINEERING', 'TECHNICIAN'];
const leftHindi = ['संस्थान', 'संगठन', 'ऑनलाइन', 'सेवाओं', 'इंटरनेट', 'इंजीनियरिंग', 'इंजीनियरिंग'];
const names = ['REENA', 'MEENA', 'DEEKA', 'RAM', 'SHYAM'];
const namesHindi = ['रीना', 'मीणा', 'डीईका', 'राम', 'श्याम'];
const rows = Array.from({ length: 17 }, (_, i) => i + 3);

const renderCell = (row: number, col: string) => {
  const idx = row - 3;
  const inTable = idx < 7;
  const inNames = idx < 5;
  const selected = col === 'F' && idx >= 1 && idx < 7;
  let content: React.ReactNode = null;
  if (col === 'E' && inTable) content = <LabelText>{leftWords[idx]}</LabelText>;
  if (col === 'F' && inTable) content = <HindiText>{leftHindi[idx]}</HindiText>;
  if (col === 'H' && inNames) content = <LabelText>{names[idx]}</LabelText>;
  if (col === 'I' && inNames) content = <HindiText>{namesHindi[idx]}</HindiText>;
  return (
    <Cell key={col} $selected={selected}>
      {content}
    </Cell>
  );
};

const App: React.FC = () => {
  return (
    <Screen>
      <GlobalStyle />
      <ExcelWindow>
        <Header>
          <HeaderArt />
          <TitleBar>
            <QuickAccess>
              <ExcelLogo />
              <SaveIcon />
              <QatPair $left={4}>
                <CurveArrow c="#bdbdbd" />
                <Tri c="#bbb" />
              </QatPair>
              <QatPair $left={3}>
                <CurveArrow c="#3d6fa8" flip />
                <Tri />
              </QatPair>
              <QatPair $left={1}>
                <FormIcon />
              </QatPair>
              <CustomizeIcon />
            </QuickAccess>
            <TitleText>PRODUCT EXPIRY ALERT - Excel (Product Activation Failed)</TitleText>
            <WindowControls>
              <WinControl kind="help" />
              <WinControl kind="ribbon" />
              <WinControl kind="min" />
              <WinControl kind="max" />
              <WinControl kind="close" />
            </WindowControls>
          </TitleBar>
          <TabRow>
            <FileTab>FILE</FileTab>
            {tabs.map((t) => (
              <Tab key={t} $active={t === 'REVIEW'}>
                {t}
              </Tab>
            ))}
            <Account>
              <Tri />
              <AccountIcon />
            </Account>
          </TabRow>
        </Header>

        <Ribbon>
          <RibbonGroup $width={156}>
            <GroupBody $pad={5}>
              <BigButton $width={43}>
                <SpellingIcon />
                Spelling
              </BigButton>
              <BigButton $width={49} $on>
                <ResearchIcon />
                Research
              </BigButton>
              <BigButton $width={52}>
                <ThesaurusIcon />
                Thesaurus
              </BigButton>
            </GroupBody>
            <GroupLabel>Proofing</GroupLabel>
          </RibbonGroup>
          <RibbonGroup $width={56}>
            <GroupBody $pad={3}>
              <BigButton $width={48}>
                <TranslateIcon />
                Translate
              </BigButton>
            </GroupBody>
            <GroupLabel>Language</GroupLabel>
          </RibbonGroup>
          <RibbonGroup $width={326}>
            <GroupBody $pad={4}>
              <BigButton $width={54}>
                <NewCommentIcon />
                New
                <br />
                Comment
              </BigButton>
              <BigButton $width={40} $off>
                <GhostComment kind="x" />
                Delete
              </BigButton>
              <BigButton $width={46} $off>
                <GhostComment kind="left" />
                Previous
              </BigButton>
              <BigButton $width={40} $off>
                <GhostComment kind="right" />
                Next
              </BigButton>
              <SmallStack $width={140} $size={11}>
                <SmallButton $off>
                  <SmallIcon kind="hide" />
                  Show/Hide Comment
                </SmallButton>
                <SmallButton>
                  <SmallIcon kind="all" />
                  Show All Comments
                </SmallButton>
                <SmallButton $on>
                  <SmallIcon kind="ink" />
                  Show Ink
                </SmallButton>
              </SmallStack>
            </GroupBody>
            <GroupLabel>Comments</GroupLabel>
          </RibbonGroup>
          <RibbonGroup $width={328}>
            <GroupBody $pad={2}>
              <BigButton $width={43}>
                <SheetLock kind="sheet" />
                Protect
                <br />
                Sheet
              </BigButton>
              <BigButton $width={52}>
                <SheetLock kind="book" />
                Protect
                <br />
                Workbook
              </BigButton>
              <BigButton $width={59}>
                <SheetLock kind="share" />
                Share
                <br />
                Workbook
              </BigButton>
              <SmallStack $width={170} $size={10.5}>
                <SmallButton>
                  <SmallIcon kind="protect" />
                  Protect and Share Workbook
                </SmallButton>
                <SmallButton>
                  <SmallIcon kind="allow" />
                  Allow Users to Edit Ranges
                </SmallButton>
                <SmallButton>
                  <SmallIcon kind="track" />
                  Track Changes
                  <Tri s={6} />
                </SmallButton>
              </SmallStack>
            </GroupBody>
            <GroupLabel>Changes</GroupLabel>
          </RibbonGroup>
          <Collapse width="11" height="7" viewBox="0 0 11 7">
            <path d="M1.500 5.500l4-4 4 4" fill="none" stroke="#555" strokeWidth="2" />
          </Collapse>
        </Ribbon>

        <FormulaBar>
          <NameBox>
            7R x 1C
            <Tri />
          </NameBox>
          <Dots>
            <VerticalDots />
          </Dots>
          <FuncBox>
            <svg width="16" height="16" viewBox="0 0 16 16">
              <path d="M2 2l12 12M14 2L2 14" stroke="#c4c4c4" strokeWidth="2" />
            </svg>
            <svg width="16" height="16" viewBox="0 0 16 16">
              <path d="M1 8l5 6L15 2" fill="none" stroke="#c4c4c4" strokeWidth="2.400" />
            </svg>
            <FxLabel>fx</FxLabel>
          </FuncBox>
          <FormulaInput>
            संस्थान
            <Chevron />
          </FormulaInput>
        </FormulaBar>

        <Workspace>
          <SheetArea>
            <SheetTop>
              <GridClip>
                <SheetGrid>
                  <Corner>
                    <Tri dir="corner" c="#d9d9d9" s={13} />
                  </Corner>
                  {columns.map((c) => (
                    <ColHead key={c} $on={c === 'F'}>
                      {c}
                    </ColHead>
                  ))}
                  <RowHead $tall>1</RowHead>
                  <Banner>HOW TO TRANSLATE OR TYPING IN OTHER LANGUAGES</Banner>
                  <RowHead $tall>2</RowHead>
                  {rows.map((r) => (
                    <React.Fragment key={r}>
                      <RowHead $on={r <= 9}>{r}</RowHead>
                      {columns.map((c) => renderCell(r, c))}
                    </React.Fragment>
                  ))}
                </SheetGrid>
                <SelectionBox />
                <CrossCursor />
              </GridClip>
              <VScroll>
                <ScrollArrow>
                  <Tri dir="up" />
                </ScrollArrow>
                <VThumb />
                <ScrollGap />
                <ScrollArrow>
                  <Tri />
                </ScrollArrow>
              </VScroll>
            </SheetTop>
            <SheetBar>
              <TabNav>
                <Tri dir="left" c="#c4c4c4" />
                <Tri dir="right" c="#c4c4c4" />
              </TabNav>
              <SheetTab>Sheet1</SheetTab>
              <SheetTab $active>Sheet4</SheetTab>
              <SheetTab>Sheet3</SheetTab>
              <AddSheet>
                <PlusCircle />
              </AddSheet>
              <SplitDots>
                <VerticalDots />
              </SplitDots>
              <HScroll>
                <ScrollArrow>
                  <Tri dir="left" />
                </ScrollArrow>
                <HThumb />
                <ScrollGap />
                <ScrollArrow>
                  <Tri dir="right" />
                </ScrollArrow>
              </HScroll>
            </SheetBar>
          </SheetArea>

          <ResearchPane>
            <PaneHead>
              <PaneTitle>Research</PaneTitle>
              <PaneActions>
                <Tri s={9} />
                <WinControl kind="close" />
              </PaneActions>
            </PaneHead>
            <SearchLabel>Search for:</SearchLabel>
            <SearchRow>
              <TextField>SHYAM</TextField>
              <GoButton>
                <GoArrow />
              </GoButton>
            </SearchRow>
            <SourceSelect>
              Translation
              <SelectArrow>
                <Tri c="#444" />
              </SelectArrow>
            </SourceSelect>
            <NavRow>
              <NavButton $width={66}>
                <BackArrow />
                Back
                <NavDrop>
                  <Tri />
                </NavDrop>
              </NavButton>
              <NavButton $width={41} $off>
                <GoArrow c="#bbb" />
                <Tri c="#ccc" />
              </NavButton>
            </NavRow>
            <ResultsPanel>
              <SectionHead>
                <Tri dir="corner" c="#555" />
                Translation
              </SectionHead>
              <PanelBody>
                <PanelText $top={6}>
                  Translate a word or
                  <br />
                  sentence.
                </PanelText>
                <PanelLabel>From</PanelLabel>
                <Select $width={133}>
                  English (United States)
                  <SelectArrow>
                    <Tri c="#444" />
                  </SelectArrow>
                </Select>
                <PanelLabel>To</PanelLabel>
                <Select $width={133}>
                  Hindi
                  <SelectArrow>
                    <Tri c="#444" />
                  </SelectArrow>
                </Select>
                <PanelLink $top={4}>Translation options...</PanelLink>
                <Rule $top={9} />
                <SectionHead $indent={4} $top={4}>
                  <Tri dir="corner" c="#555" />
                  Microsoft® Translator
                </SectionHead>
                <Tofu>
                  {[0, 1, 2, 3, 4].map((i) => (
                    <TofuBox key={i} />
                  ))}
                </Tofu>
                <InsertButton>
                  Insert
                  <NavDrop>
                    <Tri />
                  </NavDrop>
                </InsertButton>
                <Rule $top={8} />
                <TranslatorLogo>
                  <TranslatorMark />
                  <LogoWords>
                    <LogoSmall>Microsoft</LogoSmall>
                    <LogoBig>Translator</LogoBig>
                  </LogoWords>
                </TranslatorLogo>
                <PanelLink $indent={16} $top={0}>Get more languages</PanelLink>
                <PanelLink $indent={16} $top={5}>Microsoft® Translator</PanelLink>
              </PanelBody>
              <SectionHead $top={2}>
                <Tri dir="corner" c="#555" />
                Can't find it?
              </SectionHead>
              <PanelBody>
                <PanelText $top={9}>Try one of these</PanelText>
              </PanelBody>
            </ResultsPanel>
            <PaneFooter>
              <FooterLink>
                <InfoDot />
                Get updates to your services..
              </FooterLink>
              <FooterLink>
                <OptionsGlass />
                Research options...
              </FooterLink>
            </PaneFooter>
          </ResearchPane>
        </Workspace>

        <StatusBar>
          <ReadyLabel>READY</ReadyLabel>
          <MacroIcon />
          <StatusRight>
            <CountLabel>COUNT: 7</CountLabel>
            <ViewButton $on>
              <NormalView />
            </ViewButton>
            <ViewButton>
              <PageView />
            </ViewButton>
            <ViewButton>
              <BreakView />
            </ViewButton>
            <ZoomSlider>
              <ZoomSign>-</ZoomSign>
              <ZoomTrack />
              <ZoomSign>+</ZoomSign>
            </ZoomSlider>
            <ZoomValue>100%</ZoomValue>
          </StatusRight>
        </StatusBar>
      </ExcelWindow>

      <Taskbar>
        <TaskGroup>
          <TaskSlot $h={38}>
            <WinLogo />
          </TaskSlot>
          <TaskSlot $h={37}>
            <SearchGlass />
          </TaskSlot>
          <TaskSlot $h={38}>
            <CortanaRing />
          </TaskSlot>
          <TaskSlot $h={37}>
            <TaskView />
          </TaskSlot>
          <TaskSlot $h={48}>
            <EdgeIcon />
          </TaskSlot>
          <TaskSlot $h={42}>
            <FolderIcon />
          </TaskSlot>
          <TaskSlot $h={44}>
            <OfficeIcon />
          </TaskSlot>
          <TaskSlot $h={45}>
            <ChromeIcon />
          </TaskSlot>
          <TaskSlot $h={43} $on>
            <TaskExcel />
          </TaskSlot>
          <TaskSlot $h={44}>
            <FirefoxIcon />
          </TaskSlot>
          <TaskSlot $h={44}>
            <PowerPointIcon />
          </TaskSlot>
        </TaskGroup>
        <TaskGroup>
          <TaskSlot $h={22}>
            <svg width="8" height="12" viewBox="0 0 8 12">
              <path d="M7 1L1.500 6 7 11" fill="none" stroke="#eee" strokeWidth="1.300" />
            </svg>
          </TaskSlot>
          <TrayRow $pad={11}>
            <Wifi />
            <Battery />
          </TrayRow>
          <TrayRow $pad={9}>
            <Volume />
          </TrayRow>
          <ClockText>
            10:46 AM
            <br />
            6/19/2020
          </ClockText>
          <NoticeSlot $h={48}>
            <Notice />
          </NoticeSlot>
        </TaskGroup>
      </Taskbar>
      <Wallpaper />
    </Screen>
  );
};

export default App;
